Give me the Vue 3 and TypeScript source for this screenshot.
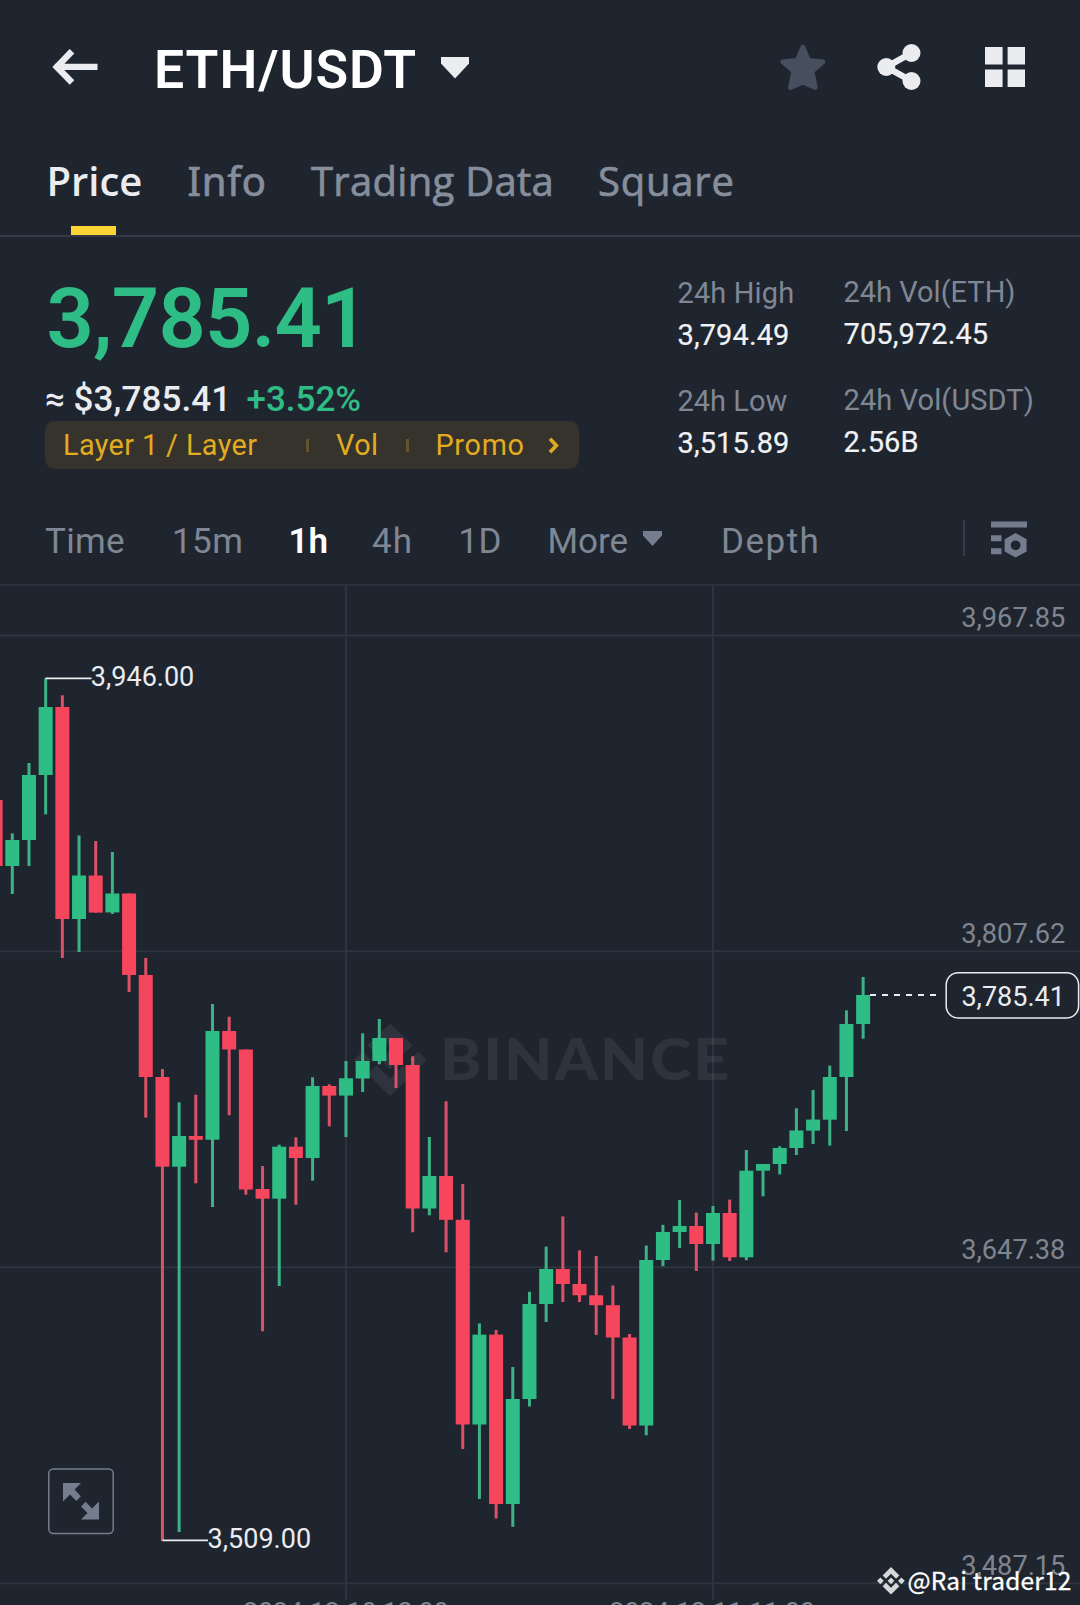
<script setup lang="ts">
interface Tab { label: string; cls: string; active?: boolean }
interface Stat { label: string; value: string; ls: number }
interface Interval { label: string; cls: string; active?: boolean; caret?: boolean }
// [up, bodyTop, bodyBottom, high, low]
type Candle = [0 | 1, number, number, number, number]

const tabs: Tab[] = [
  { label: 'Price', cls: 'price-tab', active: true },
  { label: 'Info', cls: 'info-tab' },
  { label: 'Trading Data', cls: 'data-tab' },
  { label: 'Square', cls: 'square-tab' },
]

const statsLeft: Stat[] = [
  { label: '24h High', value: '3,794.49', ls: 0.12 },
  { label: '24h Low', value: '3,515.89', ls: 0 },
]
const statsRight: Stat[] = [
  { label: '24h Vol(ETH)', value: '705,972.45', ls: 0 },
  { label: '24h Vol(USDT)', value: '2.56B', ls: 0.1 },
]

const intervals: Interval[] = [
  { label: 'Time', cls: 'i-time' },
  { label: '15m', cls: 'i-15m' },
  { label: '1h', cls: 'i-1h', active: true },
  { label: '4h', cls: 'i-4h' },
  { label: '1D', cls: 'i-1d' },
  { label: 'More', cls: 'i-more', caret: true },
  { label: 'Depth', cls: 'i-depth' },
]

const candles: Candle[] = [
  [0, 800, 866, 800, 866],
  [1, 840, 866, 833.4, 894],
  [1, 775, 840, 763, 866],
  [1, 707, 775, 678.5, 814.3],
  [0, 707, 919, 695.3, 958],
  [1, 875.5, 919, 835.5, 952],
  [0, 875.5, 912.6, 841, 912.6],
  [1, 893.5, 912.4, 852, 914],
  [0, 893.5, 975, 893.5, 992],
  [0, 975, 1077, 958, 1117.6],
  [0, 1077, 1166.7, 1069, 1541],
  [1, 1136, 1166.7, 1102.3, 1532],
  [0, 1136, 1139.8, 1094.7, 1183.3],
  [1, 1031, 1139.7, 1004, 1207],
  [0, 1031, 1049.5, 1016.7, 1115.3],
  [0, 1049.5, 1189.5, 1049.5, 1194.7],
  [0, 1189, 1198.7, 1166, 1331.3],
  [1, 1146.7, 1198.7, 1144.7, 1286],
  [0, 1146.7, 1158, 1137.3, 1204.7],
  [1, 1086, 1158, 1077.3, 1180.7],
  [0, 1086, 1095.6, 1084.3, 1126.3],
  [1, 1078.3, 1095.6, 1061, 1137],
  [1, 1061, 1078.5, 1033.3, 1092],
  [1, 1038, 1061, 1019, 1064.3],
  [0, 1038, 1065, 1038, 1088],
  [0, 1065, 1208.5, 1056.3, 1232.3],
  [1, 1176, 1208.5, 1137, 1215.3],
  [0, 1176, 1219.8, 1101.3, 1252.3],
  [0, 1219.8, 1424.5, 1184, 1449],
  [1, 1334.6, 1424.5, 1323.4, 1499],
  [0, 1334.6, 1504, 1330, 1518.4],
  [1, 1399, 1504, 1367, 1526.8],
  [1, 1304, 1399, 1291.8, 1406.5],
  [1, 1269, 1304, 1246.6, 1322],
  [0, 1269, 1284, 1216.4, 1302],
  [0, 1284, 1295.3, 1250.4, 1302],
  [0, 1295.3, 1305.2, 1256, 1335],
  [0, 1305.2, 1337.5, 1285.5, 1399],
  [0, 1337.5, 1425.5, 1334, 1429],
  [1, 1260, 1425.5, 1245.5, 1435.3],
  [1, 1232, 1260, 1224.8, 1266.2],
  [1, 1226, 1232, 1200, 1248],
  [0, 1226, 1244, 1212.6, 1271],
  [1, 1213, 1244, 1206, 1260.6],
  [0, 1213, 1257.3, 1199.6, 1261],
  [1, 1170.7, 1257.3, 1150, 1260.2],
  [1, 1164, 1170.7, 1164, 1196.3],
  [1, 1148, 1164, 1146.3, 1174.3],
  [1, 1130.5, 1148, 1108.3, 1155],
  [1, 1119.6, 1130.7, 1090, 1144],
  [1, 1077, 1119.7, 1065.7, 1145.7],
  [1, 1024, 1077, 1010.3, 1131],
  [1, 995, 1024, 977, 1038.7],
]
const STEP = 16.683
const cx = (i: number): number => 12.3 + (i - 1) * STEP

const gridY = [635.5, 951.3, 1267.3, 1583.4]
const gridX = [346, 713]
const axis = [
  { t: '3,967.85', y: 627 },
  { t: '3,807.62', y: 943 },
  { t: '3,647.38', y: 1258.8 },
  { t: '3,487.15', y: 1574.8 },
]
</script>

<template>
  <div class="screen">
    <header class="header">
      <svg class="back" width="46" height="36" viewBox="0 0 46 36">
        <path d="M2.8 17.9H45.5M20 2.2L4.8 17.9L20 33.6" fill="none" stroke="#eaecef" stroke-width="6.4" />
      </svg>
      <h1 class="pair">ETH/USDT</h1>
      <svg class="pair-caret" width="28" height="22" viewBox="0 0 28 22">
        <path d="M0 0H28V6.4L14 21.6L0 6.4Z" fill="#eaecef" />
      </svg>
      <div class="actions">
        <svg width="46" height="47" viewBox="0 0 46 47">
          <path d="M22.9 3L28.6 16.4L43.1 17.7L32.1 27.3L35.4 43.6L22.9 38.4L10.4 43.6L13.7 27.3L2.7 17.7L17.2 16.4Z" fill="#474f5f" stroke="#474f5f" stroke-width="4.6" stroke-linejoin="round" />
        </svg>
        <svg class="share" width="44" height="48" viewBox="0 0 44 48">
          <path d="M34.5 10L9.3 24L34.5 38" fill="none" stroke="#eaecef" stroke-width="6.4" />
          <circle cx="34.5" cy="10" r="9" fill="#eaecef" />
          <circle cx="9.3" cy="24" r="9" fill="#eaecef" />
          <circle cx="34.5" cy="38" r="9" fill="#eaecef" />
        </svg>
        <svg class="apps" width="40" height="40" viewBox="0 0 40 40">
          <path d="M0 0H17.6V17.4H0ZM22.6 0H40V17.4H22.6ZM0 22.4H17.6V40H0ZM22.6 22.4H40V40H22.6Z" fill="#eaecef" />
        </svg>
      </div>
    </header>

    <nav class="tabs">
      <div v-for="t in tabs" :key="t.label" class="tab" :class="[t.cls, { active: t.active }]">
        <span class="tab-label">{{ t.label }}</span>
        <span v-if="t.active" class="tab-bar"></span>
      </div>
    </nav>

    <section class="summary">
      <div class="quote">
        <div class="last">3,785.41</div>
        <div class="fiat">
          <span class="approx">≈</span><span class="usd">$3,785.41</span><span class="change">+3.52%</span>
        </div>
        <div class="tags">
          <span class="tag-layer">Layer 1 / Layer</span>
          <i class="sep"></i>
          <span class="tag-vol">Vol</span>
          <i class="sep"></i>
          <span class="tag-promo">Promo</span>
          <svg width="11" height="17" viewBox="0 0 11 17">
            <path d="M2 1.8L8.3 8.5L2 15.2" fill="none" stroke="#dea821" stroke-width="3.8" />
          </svg>
        </div>
      </div>
      <div class="stats">
        <div class="stat-col">
          <div v-for="s in statsLeft" :key="s.label" class="stat">
            <div class="stat-label" :style="{ letterSpacing: s.ls + 'px' }">{{ s.label }}</div>
            <div class="stat-value">{{ s.value }}</div>
          </div>
        </div>
        <div class="stat-col right">
          <div v-for="s in statsRight" :key="s.label" class="stat">
            <div class="stat-label" :style="{ letterSpacing: s.ls + 'px' }">{{ s.label }}</div>
            <div class="stat-value">{{ s.value }}</div>
          </div>
        </div>
      </div>
    </section>

    <nav class="intervals">
      <div v-for="i in intervals" :key="i.label" class="interval" :class="[i.cls, { on: i.active }]">
        <span>{{ i.label }}</span>
        <svg v-if="i.caret" class="more-caret" width="19" height="15" viewBox="0 0 19 15">
          <path d="M0 0H19V4.6L9.5 15L0 4.6Z" fill="#747d8e" />
        </svg>
      </div>
      <i class="bar"></i>
      <svg class="settings" width="36" height="37" viewBox="0 0 36 37">
        <path d="M0 0.5H36V6.5H0ZM0 14.3H10.5V20.3H0ZM0 27.3H10.5V33.3H0Z" fill="#747d8e" />
        <path fill-rule="evenodd" d="M24.6 12L35.6 18.2V30.4L24.6 36.6L13.6 30.4V18.2ZM24.6 19.4A4.9 4.9 0 1 0 24.6 29.2A4.9 4.9 0 1 0 24.6 19.4Z" fill="#747d8e" />
      </svg>
    </nav>

    <svg class="chart" width="1080" height="1021" viewBox="0 584 1080 1021">
      <rect x="0" y="584" width="1080" height="2" fill="#2a313c" />
      <rect v-for="y in gridY" :key="y" x="0" :y="y - 0.9" width="1080" height="1.8" fill="#2f3641" />
      <rect v-for="x in gridX" :key="x" :x="x - 1" y="585" width="2" height="1015" fill="#2d343f" />

      <g fill="#c8ccd8" fill-opacity="0.09">
        <path d="M390 1023.5L412.5 1045.5L403.5 1054L390 1041L376.5 1054L367.5 1045.5ZM390 1096L412.5 1074L403.5 1065.5L390 1078.5L376.5 1065.5L367.5 1074ZM390 1050.5L399.5 1060L390 1069.5L380.5 1060ZM362.5 1051.5L371 1060L362.5 1068.5L354 1060ZM418 1051.5L426.5 1060L418 1068.5L409.5 1060Z" />
        <text class="brand" transform="translate(440 1080.3) scale(1.1 1)">BINANCE</text>
      </g>

      <g v-for="(c, i) in candles" :key="i">
        <rect :x="cx(i) - 1.5" :y="c[3]" width="3" :height="c[4] - c[3]" :fill="c[0] ? '#3db287' : '#db5268'" />
        <rect :x="cx(i) - 7" :y="c[1]" width="14" :height="c[2] - c[1]" :fill="c[0] ? '#2ebd85' : '#f6465d'" />
      </g>

      <path d="M45.5 678.3H91.5M162.5 1540.4H208" stroke="#eaecef" stroke-width="1.7" />
      <text class="mark" x="90.8" y="686">3,946.00</text>
      <text class="mark" x="207.6" y="1547.8">3,509.00</text>

      <path d="M870 995H936" stroke="#eaecef" stroke-width="1.8" stroke-dasharray="6 6" />
      <rect x="946.2" y="972.8" width="132.4" height="45.2" rx="12" fill="#1f252f" stroke="#eaecef" stroke-width="1.5" />
      <text class="mark" x="961.4" y="1006">3,785.41</text>

      <text v-for="a in axis" :key="a.t" class="axis" x="961.2" :y="a.y">{{ a.t }}</text>
      <text class="axis date" x="243" y="1622.3">2024-12-10 13:00</text>
      <text class="axis date" x="609.3" y="1622.3">2024-12-11 11:00</text>

      <rect x="48.8" y="1469" width="64.4" height="64.6" rx="4.5" fill="none" stroke="#747d8e" stroke-width="1.5" />
      <path d="M63 1483H81L74.5 1489.6L80.9 1496.2L76.4 1501L70 1494.4L63 1501.5ZM99 1519.5H81L87.5 1513L81 1506.6L85.6 1501.8L92 1508.4L99 1501.5Z" fill="#747d8e" />

      <g fill="#d6d7d9">
        <path d="M891 1567L899.4 1575.4L896 1578.8L891 1573.8L886 1578.8L882.6 1575.4ZM891 1594.6L899.4 1586.2L896 1582.8L891 1587.8L886 1582.8L882.6 1586.2ZM891 1577.4L894.4 1580.8L891 1584.2L887.6 1580.8ZM880.4 1577.4L883.8 1580.8L880.4 1584.2L877 1580.8ZM901.4 1577.4L904.8 1580.8L901.4 1584.2L898 1580.8Z" />
      </g>
      <text class="author" x="907.5" y="1590">@Rai trader12</text>
    </svg>
  </div>
</template>

<style>
body {
  margin: 0;
  background: #1f252f;
}
</style>

<style scoped>
.screen {
  width: 1080px;
  height: 1605px;
  overflow: hidden;
  background: #1f252f;
  font-family: Roboto, 'Liberation Sans', sans-serif;
  color: #eaecef;
  white-space: nowrap;
}
svg {
  display: block;
  flex: none;
}
.header {
  display: flex;
  align-items: center;
  height: 134px;
  padding: 0 55px 0 52px;
}
.pair {
  width: 284px;
  margin: 5px 0 0 56px;
  font-size: 53.5px;
  line-height: 64px;
  font-weight: 600;
  letter-spacing: 0.9px;
  color: #fff;
}
.pair-caret {
  margin-left: 3px;
  margin-top: 1px;
}
.actions {
  display: flex;
  align-items: center;
  margin-left: auto;
}
.share {
  margin-left: 51px;
}
.apps {
  margin-left: 64px;
}
.tabs {
  display: flex;
  height: 101px;
  padding-left: 46.5px;
  border-bottom: 2px solid #343a45;
  font-family: 'Open Sans', 'Noto Sans', sans-serif;
  font-size: 40px;
  color: #868e9c;
}
.tab {
  display: flex;
  flex-direction: column;
}
.tab-label {
  height: 92px;
  line-height: 94px;
  -webkit-text-stroke: 0.7px currentColor;
}
.price-tab {
  width: 141px;
}
.price-tab .tab-label {
  -webkit-text-stroke-width: 0;
  font-weight: 600;
}
.info-tab {
  width: 123.5px;
  font-family: 'Noto Sans', sans-serif;
  letter-spacing: 0.7px;
}
.data-tab {
  width: 287px;
  letter-spacing: 0.3px;
}
.square-tab {
  letter-spacing: 0.8px;
}
.active {
  color: #eaecef;
}
.tab-bar {
  width: 45px;
  height: 9px;
  margin-left: 24.5px;
  background: #fcd535;
}
.summary {
  display: flex;
  height: 262px;
}
.quote {
  width: 632px;
  padding: 32px 0 0 45px;
}
.last {
  padding-left: 1.5px;
  font-size: 83px;
  line-height: 100px;
  font-weight: 600;
  letter-spacing: -0.8px;
  color: #2ebd85;
}
.fiat {
  display: flex;
  margin-top: 9px;
  font-size: 35px;
  line-height: 44px;
  font-weight: 500;
}
.approx {
  width: 28.5px;
}
.usd {
  width: 173px;
  letter-spacing: 0.1px;
}
.change {
  color: #2ebd85;
}
.tags {
  display: flex;
  align-items: center;
  box-sizing: border-box;
  width: 534px;
  height: 48px;
  margin-top: -1px;
  padding-left: 18px;
  border-radius: 10px;
  background: #35332c;
  color: #e2ac20;
  font-size: 28.8px;
  line-height: 48px;
}
.tag-layer {
  width: 243px;
  letter-spacing: 0.4px;
}
.sep {
  width: 2.5px;
  height: 13px;
  background: #63542b;
}
.tag-vol {
  width: 70px;
  margin-left: 27.5px;
  letter-spacing: 0.5px;
}
.tag-promo {
  width: 112.5px;
  margin-left: 27px;
  letter-spacing: 0.7px;
}
.stats {
  display: flex;
  margin-left: 0.5px;
  padding-top: 35px;
  font-size: 29px;
  line-height: 42px;
}
.stat-col {
  display: flex;
  flex-direction: column;
  gap: 24px;
  width: 166px;
}
.right {
  margin-top: -1px;
}
.stat-label {
  color: #7f8794;
}
.stat-value {
  color: #f0f2f5;
  letter-spacing: 0.1px;
  -webkit-text-stroke: 0.2px currentColor;
}
.intervals {
  display: flex;
  align-items: center;
  height: 85px;
  padding-left: 45px;
  font-size: 35px;
  line-height: 84px;
  color: #7f8794;
}
.interval {
  display: flex;
}
.i-time {
  width: 127px;
  letter-spacing: 0.3px;
}
.i-15m {
  width: 116.5px;
  letter-spacing: 0.4px;
}
.i-1h {
  width: 83.6px;
}
.i-4h {
  width: 86.4px;
  letter-spacing: 1px;
}
.i-1d {
  width: 89px;
  letter-spacing: 0.3px;
}
.i-more {
  width: 173.5px;
}
.i-depth {
  width: 242.5px;
  letter-spacing: 1.5px;
}
.on {
  color: #fff;
  font-weight: 600;
}
.more-caret {
  margin: 31.5px 0 0 14.5px;
}
.bar {
  width: 2px;
  height: 36px;
  margin-top: -7px;
  background: #363d49;
}
.settings {
  margin-left: 25.5px;
  margin-top: -5px;
}
.brand {
  font-family: Lato, sans-serif;
  font-size: 56.5px;
  font-weight: 900;
  letter-spacing: 1.9px;
}
.mark {
  font-size: 27px;
  fill: #eaecef;
}
.axis {
  font-size: 27.2px;
  fill: #7f8590;
}
.date {
  letter-spacing: -0.4px;
}
.author {
  font-family: 'Noto Sans CJK SC', sans-serif;
  font-size: 24.4px;
  font-weight: 400;
  letter-spacing: 0.2px;
  fill: #fff;
  stroke: #fff;
  stroke-width: 0.3px;
}
</style>
